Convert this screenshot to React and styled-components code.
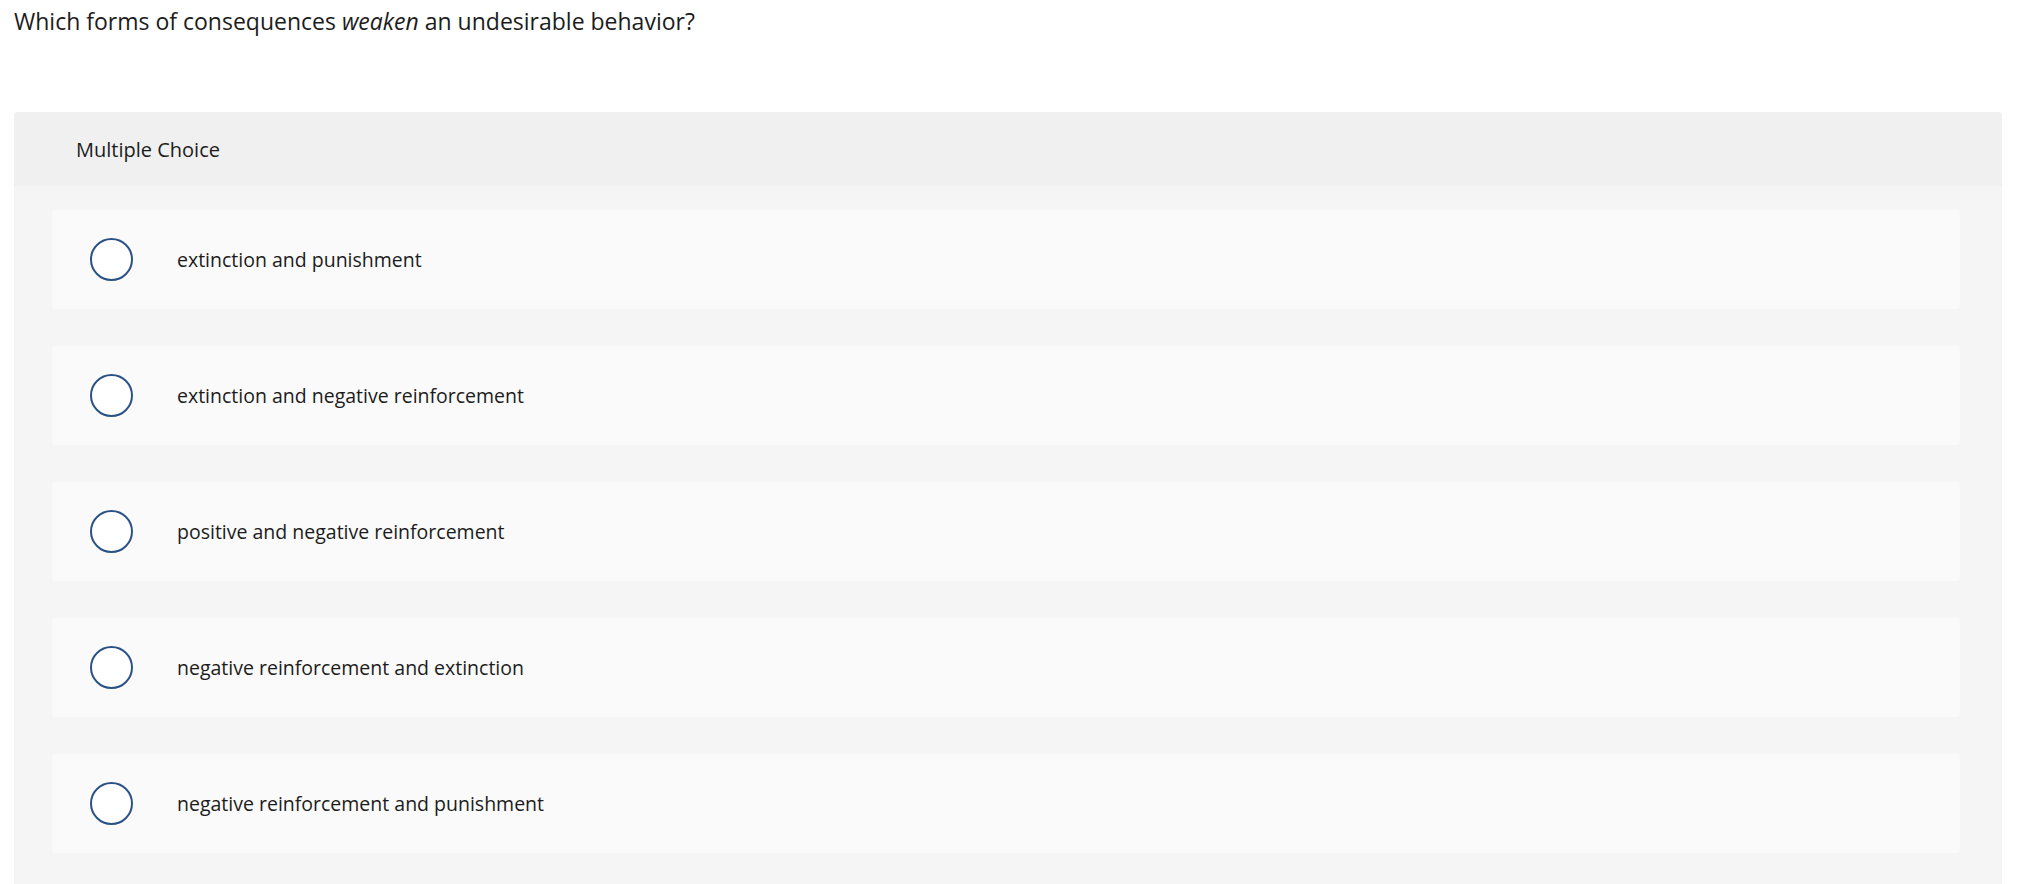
import React from 'react';
import styled, { createGlobalStyle } from 'styled-components';

const GlobalStyle = createGlobalStyle`
  body {
    margin: 0;
    background: #fff;
    font-family: "Open Sans", "Liberation Sans", sans-serif;
    color: #1c1c1c;
  }
`;

const Page = styled.div`
  padding: 0 20px 0 14px;
`;

const Question = styled.div`
  font-size: 23px;
  line-height: 26px;
  padding-top: 8px;
  em {
    font-style: italic;
  }
`;

const Panel = styled.section`
  margin-top: 78px;
  background: #f5f5f5;
  border-radius: 4px 4px 0 0;
  padding-bottom: 40px;
`;

const PanelHeader = styled.div`
  height: 74px;
  display: flex;
  align-items: center;
  padding-left: 62px;
  background: #f0f0f0;
  border-radius: 4px 4px 0 0;
  font-size: 20px;
`;

const Choices = styled.div`
  display: flex;
  flex-direction: column;
  gap: 37px;
  padding: 24px 42px 0 38px;
`;

const Choice = styled.label`
  display: flex;
  align-items: center;
  height: 99px;
  padding-left: 38px;
  background: #fafafa;
  border-radius: 4px;
  font-size: 19.5px;
  line-height: 24px;
  cursor: pointer;
`;

const Radio = styled.span`
  box-sizing: border-box;
  width: 43px;
  height: 43px;
  border: 2px solid #2b5287;
  border-radius: 50%;
  background: #fff;
  flex-shrink: 0;
  margin-right: 44px;
`;

const options = [
  'extinction and punishment',
  'extinction and negative reinforcement',
  'positive and negative reinforcement',
  'negative reinforcement and extinction',
  'negative reinforcement and punishment',
];

export default function App() {
  return (
    <Page>
      <GlobalStyle />
      <Question>
        Which forms of consequences <em>weaken</em> an undesirable behavior?
      </Question>
      <Panel>
        <PanelHeader>Multiple Choice</PanelHeader>
        <Choices>
          {options.map((text) => (
            <Choice key={text}>
              <Radio />
              {text}
            </Choice>
          ))}
        </Choices>
      </Panel>
    </Page>
  );
}
